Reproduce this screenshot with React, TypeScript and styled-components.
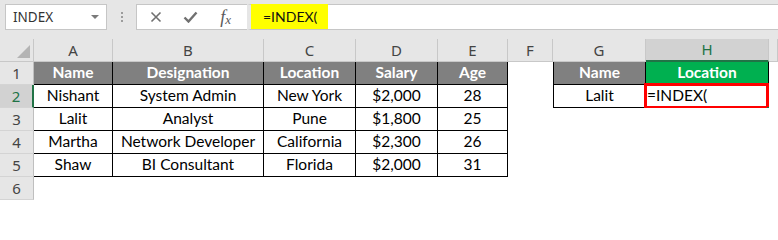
import styled, { createGlobalStyle } from "styled-components"

const GlobalStyle = createGlobalStyle`
    html, body {
        margin: 0;
        padding: 0;
        background: #ffffff;
    }
    * {
        box-sizing: border-box;
    }
`

type Kind = "corner" | "col" | "row" | "head" | "green" | "data" | "blank"

interface CellDef {
    text?: string
    kind: Kind
    selected?: boolean
    leftEdge?: boolean
    bottomEdge?: boolean
    active?: boolean
}

const columns = ["A", "B", "C", "D", "E", "F", "G", "H"]

const people = [
    ["Nishant", "System Admin", "New York", "$2,000", "28"],
    ["Lalit", "Analyst", "Pune", "$1,800", "25"],
    ["Martha", "Network Developer", "California", "$2,300", "26"],
    ["Shaw", "BI Consultant", "Florida", "$2,000", "31"],
]

const buildRows = (): CellDef[][] => {
    const rows: CellDef[][] = []
    // column header row
    rows.push([
        { kind: "corner" },
        ...columns.map(c => ({ text: c, kind: "col" as Kind, selected: c === "H" })),
        { kind: "col" },
    ])
    // row 1
    rows.push([
        { text: "1", kind: "row" },
        ...["Name", "Designation", "Location", "Salary", "Age"].map(t => ({ text: t, kind: "head" as Kind })),
        { kind: "blank" },
        { text: "Name", kind: "head", leftEdge: true },
        { text: "Location", kind: "green" },
        { kind: "blank" },
    ])
    people.forEach((p, i) => {
        const n = i + 2
        const last = i === people.length - 1
        const row: CellDef[] = [
            { text: String(n), kind: "row", selected: n === 2 },
            ...p.map(t => ({ text: t, kind: "data" as Kind, bottomEdge: last })),
            { kind: "blank" },
        ]
        if (n === 2) {
            row.push({ text: "Lalit", kind: "data", leftEdge: true })
            row.push({ text: "=INDEX(", kind: "data", active: true })
        } else {
            row.push({ kind: "blank" }, { kind: "blank" })
        }
        row.push({ kind: "blank" })
        rows.push(row)
    })
    rows.push([{ text: "6", kind: "row" }, ...Array.from({ length: 9 }, () => ({ kind: "blank" as Kind }))])
    return rows
}

export default function App() {
    const rows = buildRows()
    return (
        <>
            <GlobalStyle />
            <Window>
                <Toolbar>
                    <NameBox>
                        <NameText>INDEX</NameText>
                        <Caret />
                    </NameBox>
                    <Grip>
                        <Dot />
                        <Dot />
                        <Dot />
                    </Grip>
                    <ButtonBox>
                        <ToolButton>
                            <svg width="12" height="12" viewBox="0 0 12 12">
                                <path d="M1.5 1.5 L10.5 10.5 M10.5 1.5 L1.5 10.5" stroke="#707070" strokeWidth="1.6" fill="none" />
                            </svg>
                        </ToolButton>
                        <ToolButton>
                            <svg width="15" height="12" viewBox="0 0 15 12">
                                <path d="M1.5 6.5 L5.5 10.5 L13.5 1.5" stroke="#707070" strokeWidth="2.4" fill="none" />
                            </svg>
                        </ToolButton>
                        <ToolButton>
                            <Fx>f<sub>x</sub></Fx>
                        </ToolButton>
                    </ButtonBox>
                    <FormulaBox>
                        <Highlight>=INDEX(</Highlight>
                    </FormulaBox>
                </Toolbar>
                <Sheet>
                    {rows.map((row, r) =>
                        row.map((cell, c) => (
                            <Cell
                                key={`${r}-${c}`}
                                $kind={cell.kind}
                                $selected={!!cell.selected}
                                $leftEdge={!!cell.leftEdge}
                                $bottomEdge={!!cell.bottomEdge}
                                $active={!!cell.active}
                            >
                                {cell.kind === "corner" && <CornerMark />}
                                {cell.text}
                                {cell.active && (
                                    <>
                                        <Selection />
                                        <FillHandle />
                                    </>
                                )}
                            </Cell>
                        ))
                    )}
                </Sheet>
            </Window>
        </>
    )
}

const Window = styled.div`
    width: 778px;
    height: 200px;
    overflow: hidden;
    background: #ffffff;
`

const Toolbar = styled.div`
    height: 39px;
    display: flex;
    align-items: flex-start;
    padding: 4px 0 0 5px;
    background: #e6e6e6;
`

const NameBox = styled.div`
    width: 102px;
    height: 26px;
    display: flex;
    align-items: center;
    justify-content: space-between;
    padding: 0 7px 0 7px;
    background: #ffffff;
    border: 1px solid #c6c6c6;
`

const NameText = styled.span`
    font-family: "Noto Sans", sans-serif;
    font-size: 13.5px;
    color: #333333;
`

const Caret = styled.span`
    width: 0;
    height: 0;
    border-left: 4px solid transparent;
    border-right: 4px solid transparent;
    border-top: 4px solid #7a7a7a;
`

const Grip = styled.div`
    width: 29px;
    height: 26px;
    display: flex;
    flex-direction: column;
    align-items: center;
    justify-content: center;
    gap: 2px;
`

const Dot = styled.span`
    width: 2px;
    height: 2px;
    background: #9c9c9c;
`

const ButtonBox = styled.div`
    width: 111px;
    height: 26px;
    display: flex;
    align-items: center;
    justify-content: space-around;
    padding: 0 4px 0 2px;
    background: #ffffff;
    border: 1px solid #c6c6c6;
    border-right: none;
`

const ToolButton = styled.span`
    width: 30px;
    display: flex;
    align-items: center;
    justify-content: center;
`

const Fx = styled.span`
    font-family: "Liberation Serif", serif;
    font-style: italic;
    font-size: 18px;
    color: #5a5a5a;
    line-height: 1;
    sub {
        font-size: 13px;
        vertical-align: -1px;
    }
`

const FormulaBox = styled.div`
    flex: 1;
    height: 26px;
    background: #ffffff;
    border-top: 1px solid #c6c6c6;
    border-bottom: 1px solid #c6c6c6;
    border-left: 4px solid #e6e6e6;
    display: flex;
    align-items: stretch;
`

const Highlight = styled.span`
    width: 77px;
    display: flex;
    align-items: center;
    padding-left: 12px;
    margin-top: -1px;
    background: #ffff00;
    font-family: "Lato", sans-serif;
    font-size: 14px;
    color: #111111;
`

const Sheet = styled.div`
    display: grid;
    grid-template-columns: 34px 79px 151px 92px 82px 70px 45px 93px 123px 1fr;
    grid-auto-rows: 23px;
`

interface CellProps {
    $kind: Kind
    $selected: boolean
    $leftEdge: boolean
    $bottomEdge: boolean
    $active: boolean
}

const cellLook = (p: CellProps) => {
    switch (p.$kind) {
        case "corner":
            return `
                background: #e6e6e6;
                border-right: 1px solid #c8c8c8;
                border-bottom: 1px solid #c8c8c8;
            `
        case "col":
            return `
                background: ${p.$selected ? "#d2d2d2" : "#e6e6e6"};
                color: ${p.$selected ? "#217346" : "#444444"};
                font-family: "Noto Sans", sans-serif;
                font-size: 15px;
                border-right: 1px solid #c8c8c8;
                border-bottom: ${p.$selected ? "2px solid #217346" : "1px solid #c8c8c8"};
            `
        case "row":
            return `
                background: ${p.$selected ? "#d2d2d2" : "#e6e6e6"};
                color: ${p.$selected ? "#217346" : "#444444"};
                font-family: "Noto Sans", sans-serif;
                font-size: 15px;
                border-right: ${p.$selected ? "2px solid #217346" : "1px solid #bfbfbf"};
                border-bottom: 1px solid #d4d4d4;
            `
        case "head":
        case "green":
            return `
                background: ${p.$kind === "green" ? "#00b050" : "#808080"};
                color: #ffffff;
                font-family: "Lato", sans-serif;
                font-weight: 700;
                font-size: 15.5px;
                border-right: 1px solid #000000;
                border-bottom: 1px solid #000000;
                ${p.$leftEdge ? "border-left: 1px solid #000000;" : ""}
            `
        case "data":
            return `
                background: #ffffff;
                color: #000000;
                font-family: "Lato", sans-serif;
                font-size: 15.5px;
                border-right: 1px solid #000000;
                border-bottom: 1px solid #000000;
                ${p.$leftEdge ? "border-left: 1px solid #000000;" : ""}
                ${p.$active ? "justify-content: flex-start; padding-left: 1px;" : ""}
            `
        default:
            return `background: #ffffff;`
    }
}

const Cell = styled.div<CellProps>`
    position: relative;
    display: flex;
    align-items: center;
    justify-content: center;
    white-space: nowrap;
    line-height: 1;
    ${p => cellLook(p)}
`

const CornerMark = styled.span`
    position: absolute;
    right: 3px;
    bottom: 3px;
    width: 0;
    height: 0;
    border-left: 13px solid transparent;
    border-bottom: 13px solid #b4b4b4;
`

const Selection = styled.span`
    position: absolute;
    top: -2px;
    left: -2px;
    right: -1px;
    bottom: -2px;
    border: 3px solid #ff0000;
    pointer-events: none;
`

const FillHandle = styled.span`
    position: absolute;
    right: -2px;
    bottom: -3px;
    width: 3px;
    height: 3px;
    background: #217346;
`
